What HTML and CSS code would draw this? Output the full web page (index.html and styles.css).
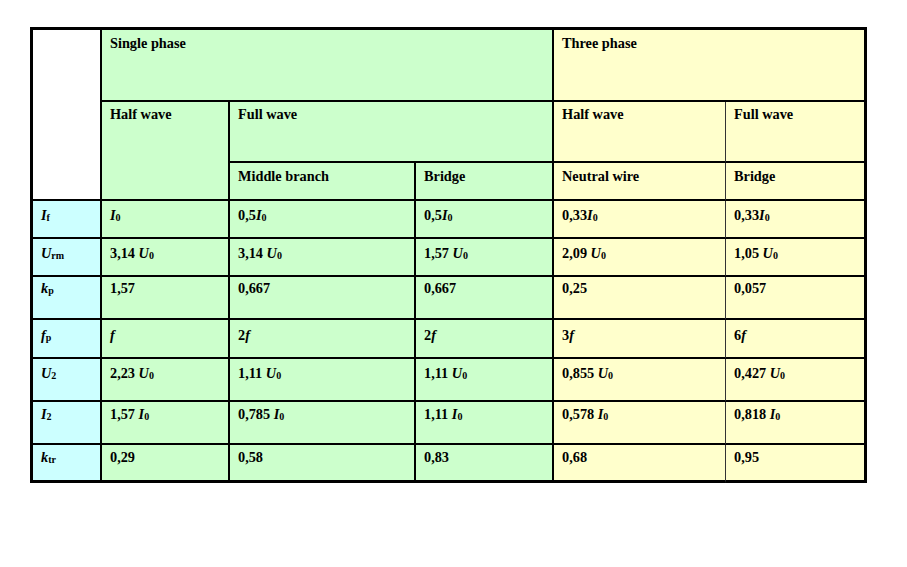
FILE: index.html
```html
<!DOCTYPE html>
<html>
<head>
<meta charset="utf-8">
<link rel="stylesheet" href="styles.css">
</head>
<body>
<div class="page">
<table class="rect">
  <colgroup>
    <col class="c1"><col class="c2"><col class="c3"><col class="c4"><col class="c5"><col class="c6">
  </colgroup>
  <tr class="r1">
    <td class="blank" rowspan="3"></td>
    <td class="g" colspan="3">Single phase</td>
    <td class="y last" colspan="2">Three phase</td>
  </tr>
  <tr class="r2">
    <td class="g" rowspan="2">Half wave</td>
    <td class="g" colspan="2">Full wave</td>
    <td class="y thin">Half wave</td>
    <td class="y last">Full wave</td>
  </tr>
  <tr class="r3">
    <td class="g">Middle branch</td>
    <td class="g">Bridge</td>
    <td class="y thin">Neutral wire</td>
    <td class="y last">Bridge</td>
  </tr>
  <tr class="r4">
    <td class="c"><i>I</i><span class="sub">f</span></td>
    <td class="g"><i>I</i><span class="sub">0</span></td>
    <td class="g">0,5<i>I</i><span class="sub">0</span></td>
    <td class="g">0,5<i>I</i><span class="sub">0</span></td>
    <td class="y thin">0,33<i>I</i><span class="sub">0</span></td>
    <td class="y last">0,33<i>I</i><span class="sub">0</span></td>
  </tr>
  <tr class="r5">
    <td class="c"><i>U</i><span class="sub">rm</span></td>
    <td class="g">3,14 <i>U</i><span class="sub">0</span></td>
    <td class="g">3,14 <i>U</i><span class="sub">0</span></td>
    <td class="g">1,57 <i>U</i><span class="sub">0</span></td>
    <td class="y thin">2,09 <i>U</i><span class="sub">0</span></td>
    <td class="y last">1,05 <i>U</i><span class="sub">0</span></td>
  </tr>
  <tr class="r6">
    <td class="c"><i>k</i><span class="sub">p</span></td>
    <td class="g">1,57</td>
    <td class="g">0,667</td>
    <td class="g">0,667</td>
    <td class="y thin">0,25</td>
    <td class="y last">0,057</td>
  </tr>
  <tr class="r7">
    <td class="c"><i>f</i><span class="sub">p</span></td>
    <td class="g"><i>f</i></td>
    <td class="g">2<i>f</i></td>
    <td class="g">2<i>f</i></td>
    <td class="y thin">3<i>f</i></td>
    <td class="y last">6<i>f</i></td>
  </tr>
  <tr class="r8">
    <td class="c"><i>U</i><span class="sub">2</span></td>
    <td class="g">2,23 <i>U</i><span class="sub">0</span></td>
    <td class="g">1,11 <i>U</i><span class="sub">0</span></td>
    <td class="g">1,11 <i>U</i><span class="sub">0</span></td>
    <td class="y thin">0,855 <i>U</i><span class="sub">0</span></td>
    <td class="y last">0,427 <i>U</i><span class="sub">0</span></td>
  </tr>
  <tr class="r9">
    <td class="c"><i>I</i><span class="sub">2</span></td>
    <td class="g">1,57 <i>I</i><span class="sub">0</span></td>
    <td class="g">0,785 <i>I</i><span class="sub">0</span></td>
    <td class="g">1,11 <i>I</i><span class="sub">0</span></td>
    <td class="y thin">0,578 <i>I</i><span class="sub">0</span></td>
    <td class="y last">0,818 <i>I</i><span class="sub">0</span></td>
  </tr>
  <tr class="r10 lastrow">
    <td class="c"><i>k</i><span class="sub">tr</span></td>
    <td class="g">0,29</td>
    <td class="g">0,58</td>
    <td class="g">0,83</td>
    <td class="y thin">0,68</td>
    <td class="y last">0,95</td>
  </tr>
</table>
</div>
</body>
</html>
```

FILE: styles.css
```css
html, body {
  margin: 0;
  padding: 0;
  background: #ffffff;
}

.page {
  padding: 27px 0 0 30px;
}

.rect {
  border-collapse: separate;
  border-spacing: 0;
  table-layout: fixed;
  width: 837px;
  border-top: 3px solid #000;
  border-left: 3px solid #000;
  font-family: "Liberation Serif", "Times New Roman", serif;
  font-weight: bold;
  font-size: 14.3px;
  color: #000;
}

.c1 { width: 69px; }
.c2 { width: 128px; }
.c3 { width: 186px; }
.c4 { width: 138px; }
.c5 { width: 172px; }
.c6 { width: 141px; }

.rect td {
  box-sizing: border-box;
  vertical-align: top;
  text-align: left;
  padding: 5px 0 0 8px;
  border-right: 2px solid #000;
  border-bottom: 2px solid #000;
  line-height: 16px;
  white-space: nowrap;
}

.rect td.thin {
  border-right: 1px solid #333;
}

.rect td.last {
  border-right: 3px solid #000;
}

.rect .lastrow td {
  border-bottom: 3px solid #000;
}

.r1 { height: 72px; }
.r2 { height: 61px; }
.r3 { height: 38px; }
.r4 { height: 38px; }
.r5 { height: 38px; }
.r6 { height: 43px; }
.r7 { height: 39px; }
.r8 { height: 43px; }
.r9 { height: 43px; }
.r10 { height: 38px; }

.r1 td { padding-top: 5px; }
.r2 td { padding-top: 4px; }
.r3 td { padding-top: 5px; }
.r4 td, .r5 td { padding-top: 6px; }
.r6 td { padding-top: 3px; }
.r7 td { padding-top: 7px; }
.r8 td { padding-top: 6px; }
.r9 td, .r10 td { padding-top: 4px; }

.blank { background: #ffffff; }
.g { background: #ccffcc; }
.y { background: #ffffcc; }
.c { background: #ccffff; }

.rect i {
  font-style: italic;
}

.sub {
  font-size: 10px;
  vertical-align: -1px;
}
```
